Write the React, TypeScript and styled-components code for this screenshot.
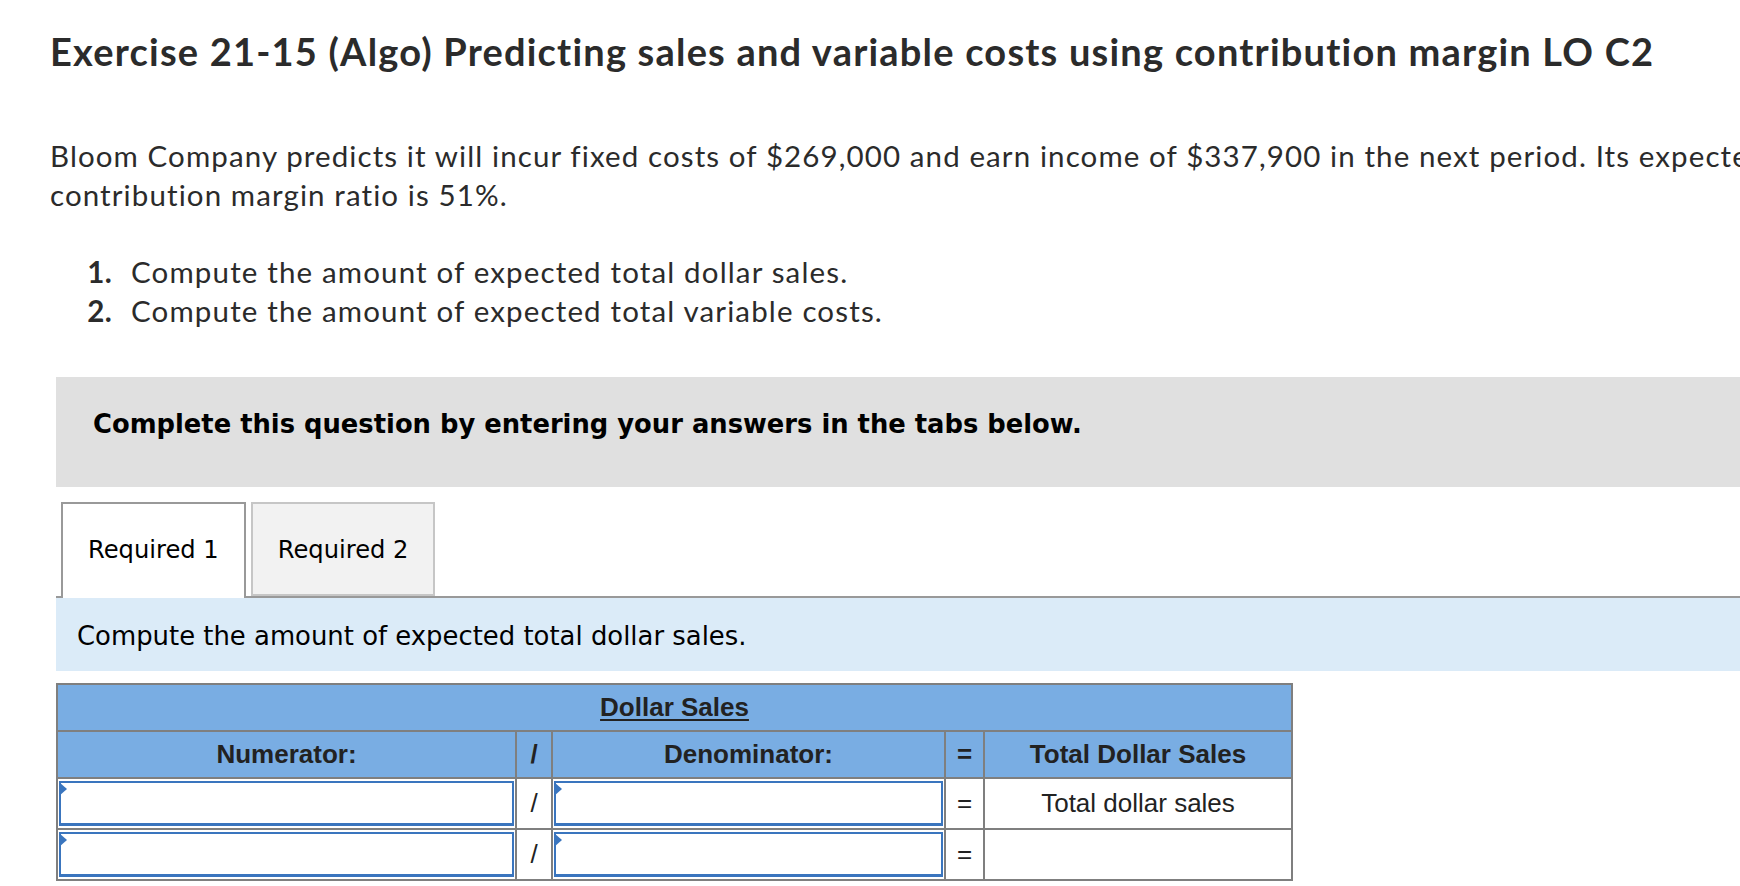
import styled, { createGlobalStyle } from 'styled-components'

const GlobalStyle = createGlobalStyle`
  html,
  body {
    margin: 0;
    padding: 0;
    overflow: hidden;
    background: #ffffff;
  }
`

const StyledMain = styled.main`
  padding: 29px 0 0 50px;
  width: 1860px;
  color: #2b2b2b;
  font-family: Lato, 'Noto Sans', sans-serif;
`

const StyledTitle = styled.h1`
  margin: 0;
  font-size: 38px;
  line-height: 44px;
  font-weight: 700;
  letter-spacing: 1.2px;
`

const StyledIntro = styled.p`
  margin: 64px 0 0;
  width: 1780px;
  font-size: 29.5px;
  line-height: 38.5px;
  letter-spacing: 1.1px;
`

const StyledList = styled.ol`
  list-style: none;
  margin: 39px 0 0;
  padding: 0;
`

const StyledItem = styled.li`
  display: flex;
  gap: 19px;
  font-size: 29.5px;
  line-height: 38.5px;
  letter-spacing: 1.15px;
`

const StyledNumber = styled.span`
  width: 62px;
  text-align: right;
  font-weight: 700;
  letter-spacing: 0.3px;
`

const StyledSection = styled.section`
  margin: 47px 0 0 6px;
  font-family: 'DejaVu Sans', Verdana, sans-serif;
  color: #000000;
`

const StyledNotice = styled.div`
  box-sizing: border-box;
  height: 110px;
  padding: 32px 0 0 37px;
  background: #e0e0e0;
  font-size: 25.8px;
  font-weight: 700;
`

const StyledTabBar = styled.div`
  display: flex;
  align-items: flex-start;
  gap: 5px;
  margin-top: 15px;
  padding-left: 5px;
  border-bottom: 2px solid #999999;
`

const StyledTab = styled.button<{ $active?: boolean }>`
  box-sizing: border-box;
  display: flex;
  align-items: flex-start;
  height: ${p => (p.$active ? '96px' : '94px')};
  margin-bottom: ${p => (p.$active ? '-2px' : '0')};
  padding: 32px 25px 0;
  border: 2px solid ${p => (p.$active ? '#999999' : '#c6c6c6')};
  border-bottom: ${p => (p.$active ? 'none' : '2px solid #c6c6c6')};
  background: ${p => (p.$active ? '#ffffff' : '#f2f2f2')};
  font-family: inherit;
  font-size: 24.2px;
  line-height: normal;
  color: #000000;
  cursor: pointer;
`

const StyledPrompt = styled.div`
  box-sizing: border-box;
  height: 73px;
  padding: 23px 0 0 21px;
  background: #dbebf8;
  font-size: 25.9px;
`

const StyledTable = styled.table`
  margin-top: 12px;
  width: 1235px;
  table-layout: fixed;
  border-collapse: collapse;
  border: 2px solid #7f7f7f;
  font-family: 'Liberation Sans', Arial, sans-serif;
  font-size: 26px;
  color: #222222;
`

const StyledHead = styled.th<{ $underline?: boolean }>`
  height: 45px;
  padding: 0;
  border: 2px solid #7f7f7f;
  background: #79ade3;
  font-weight: 700;
  text-align: center;
  text-decoration: ${p => (p.$underline ? 'underline' : 'none')};
  text-underline-offset: 3px;
`

const StyledCell = styled.td`
  height: 47px;
  padding: 0;
  border: 2px solid #7f7f7f;
  text-align: center;
`

const StyledEntryCell = styled.td`
  height: 47px;
  padding: 1px;
  border: 2px solid #7f7f7f;
`

const StyledEntry = styled.div`
  position: relative;
  box-sizing: border-box;
  height: 45px;
  border: 2px solid #3a75be;
  border-bottom-width: 3px;
  background: #ffffff;
`

const StyledMarker = styled.span`
  position: absolute;
  top: -1px;
  left: -2px;
  width: 0;
  height: 0;
  border-top: 7px solid transparent;
  border-bottom: 7px solid transparent;
  border-left: 8px solid #3a75be;
`

function Entry() {
  return (
    <StyledEntryCell>
      <StyledEntry>
        <StyledMarker />
      </StyledEntry>
    </StyledEntryCell>
  )
}

export default function App() {
  const rows = ['Total dollar sales', '']

  return (
    <>
      <GlobalStyle />
      <StyledMain>
        <StyledTitle>
          Exercise 21-15 (Algo) Predicting sales and variable costs using
          contribution margin LO C2
        </StyledTitle>
        <StyledIntro>
          Bloom Company predicts it will incur fixed costs of $269,000 and earn
          income of $337,900 in the next period. Its expected contribution
          margin ratio is 51%.
        </StyledIntro>
        <StyledList>
          <StyledItem>
            <StyledNumber>1.</StyledNumber>
            Compute the amount of expected total dollar sales.
          </StyledItem>
          <StyledItem>
            <StyledNumber>2.</StyledNumber>
            Compute the amount of expected total variable costs.
          </StyledItem>
        </StyledList>

        <StyledSection>
          <StyledNotice>
            Complete this question by entering your answers in the tabs below.
          </StyledNotice>
          <StyledTabBar>
            <StyledTab $active>Required 1</StyledTab>
            <StyledTab>Required 2</StyledTab>
          </StyledTabBar>
          <StyledPrompt>Compute the amount of expected total dollar sales.</StyledPrompt>

          <StyledTable>
            <colgroup>
              <col style={{ width: 459 }} />
              <col style={{ width: 36 }} />
              <col style={{ width: 393 }} />
              <col style={{ width: 39 }} />
              <col style={{ width: 308 }} />
            </colgroup>
            <thead>
              <tr>
                <StyledHead colSpan={5} $underline>
                  Dollar Sales
                </StyledHead>
              </tr>
              <tr>
                <StyledHead>Numerator:</StyledHead>
                <StyledHead>/</StyledHead>
                <StyledHead>Denominator:</StyledHead>
                <StyledHead>=</StyledHead>
                <StyledHead>Total Dollar Sales</StyledHead>
              </tr>
            </thead>
            <tbody>
              {rows.map((label, i) => (
                <tr key={i}>
                  <Entry />
                  <StyledCell>/</StyledCell>
                  <Entry />
                  <StyledCell>=</StyledCell>
                  <StyledCell>{label}</StyledCell>
                </tr>
              ))}
            </tbody>
          </StyledTable>
        </StyledSection>
      </StyledMain>
    </>
  )
}
